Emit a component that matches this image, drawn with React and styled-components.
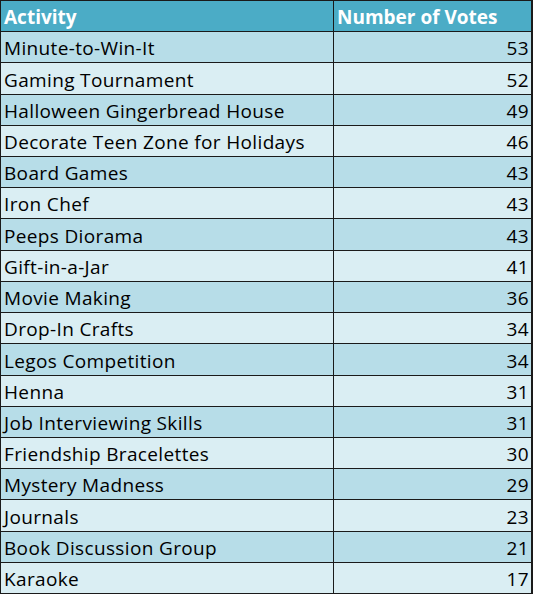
import React from 'react';
import styled, {createGlobalStyle} from 'styled-components';

const GlobalStyle = createGlobalStyle`
    body {
        margin: 0;
        background: #ffffff;
    }
`;

const Table = styled.div`
    display: grid;
    grid-template-columns: 332px 197px;
    grid-template-rows: repeat(19, 1fr);
    gap: 1px;
    width: 531px;
    height: 592px;
    background: #1a1a1a;
    border: 1px solid #1a1a1a;
    font-family: "Open Sans", Lato, sans-serif;
`;

const Cell = styled.div`
    display: flex;
    align-items: flex-end;
    justify-content: ${props => props.$num ? 'flex-end' : 'flex-start'};
    padding: 0 2px 3px 3px;
    font-size: 19px;
    line-height: 22px;
    letter-spacing: 0.35px;
    color: ${props => props.$header ? '#ffffff' : '#000000'};
    font-weight: ${props => props.$header ? 700 : 400};
    background: ${props => props.$header ? '#4bacc6' : props.$alt ? '#daeef3' : '#b7dde8'};
    white-space: nowrap;
`;

const HeaderCell = styled(Cell)`
    justify-content: flex-start;
    letter-spacing: 0;
`;

const votes = [
    ['Minute-to-Win-It', 53],
    ['Gaming Tournament', 52],
    ['Halloween Gingerbread House', 49],
    ['Decorate Teen Zone for Holidays', 46],
    ['Board Games', 43],
    ['Iron Chef', 43],
    ['Peeps Diorama', 43],
    ['Gift-in-a-Jar', 41],
    ['Movie Making', 36],
    ['Drop-In Crafts', 34],
    ['Legos Competition', 34],
    ['Henna', 31],
    ['Job Interviewing Skills', 31],
    ['Friendship Bracelettes', 30],
    ['Mystery Madness', 29],
    ['Journals', 23],
    ['Book Discussion Group', 21],
    ['Karaoke', 17],
];

const App = () => {
    return <>
        <GlobalStyle />
        <Table>
            <HeaderCell $header>Activity</HeaderCell>
            <HeaderCell $header>Number of Votes</HeaderCell>
            {votes.map(([name, count], i) => (
                <React.Fragment key={name}>
                    <Cell $alt={i % 2 === 1}>{name}</Cell>
                    <Cell $alt={i % 2 === 1} $num>{count}</Cell>
                </React.Fragment>
            ))}
        </Table>
    </>
};

export default App;
